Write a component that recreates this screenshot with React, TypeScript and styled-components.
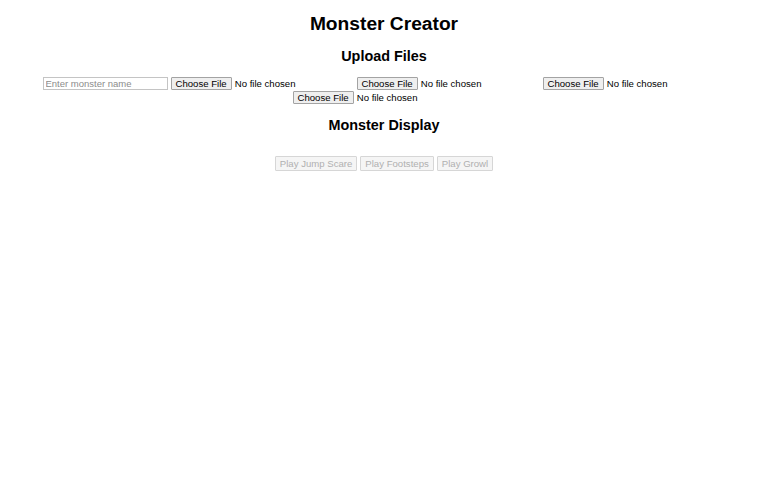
import styled, { createGlobalStyle } from 'styled-components';
import { useState } from 'react';

const GlobalStyle = createGlobalStyle`
  html, body {
    margin: 0;
    background: #fff;
    color: #000;
    font-family: 'Liberation Sans', Arial, sans-serif;
  }
`;

const SOUNDS = ['Play Jump Scare', 'Play Footsteps', 'Play Growl'];
const UPLOADS = ['image', 'jumpScare', 'footsteps', 'growl'];

export default function App() {
  const [name, setName] = useState('');

  return (
    <Page>
      <GlobalStyle />
      <Title>Monster Creator</Title>

      <SectionTitle>Upload Files</SectionTitle>
      <UploadRow>
        <NameInput
          type='text'
          placeholder='Enter monster name'
          value={name}
          onChange={(e) => setName(e.target.value)}
        />
        {UPLOADS.map((id) => (
          <FileInput key={id} type='file' id={id} />
        ))}
      </UploadRow>

      <SectionTitle>Monster Display</SectionTitle>
      <Display />
      <Controls>
        {SOUNDS.map((label) => (
          <SoundButton key={label} disabled>
            {label}
          </SoundButton>
        ))}
      </Controls>
    </Page>
  );
}

const Page = styled.main`
  min-height: 100vh;
  padding: 0 5px;
  box-sizing: border-box;
  text-align: center;
`;

const Title = styled.h1`
  font-size: 19.2px;
  font-weight: 700;
  line-height: 22px;
  margin: 13px 0 13px;
`;

const SectionTitle = styled.h2`
  font-size: 14.4px;
  font-weight: 700;
  line-height: 17px;
  margin: 0 0 12px;
`;

const UploadRow = styled.div`
  display: flex;
  flex-wrap: wrap;
  justify-content: center;
  column-gap: 3px;
  row-gap: 1px;
  margin-bottom: 13px;
`;

const NameInput = styled.input`
  box-sizing: border-box;
  width: 125px;
  height: 13px;
  padding: 0 2px;
  border: 1px solid #c4c4c4;
  border-radius: 0;
  font-family: 'Liberation Sans', Arial, sans-serif;
  font-size: 9.5px;
  color: #000;
  outline: none;

  &::placeholder {
    color: #8c8c8c;
  }
`;

const FileInput = styled.input`
  box-sizing: border-box;
  width: 183px;
  height: 13px;
  padding: 0;
  font-family: 'Liberation Sans', Arial, sans-serif;
  font-size: 9.6px;
  line-height: 11px;
  color: #000;
  text-align: left;

  &::file-selector-button {
    box-sizing: border-box;
    height: 13px;
    margin: 0 3px 0 0;
    padding: 0 4px;
    border: 1px solid #a3a3a3;
    border-radius: 1px;
    background: #efefef;
    font-family: 'Liberation Sans', Arial, sans-serif;
    font-size: 9.6px;
    color: #000;
  }
`;

const Display = styled.div`
  height: 10px;
`;

const Controls = styled.div`
  display: flex;
  justify-content: center;
  gap: 3px;
`;

const SoundButton = styled.button`
  box-sizing: border-box;
  height: 15px;
  padding: 0 4px;
  border: 1px solid #d6d6d6;
  border-radius: 1px;
  background: #f5f5f5;
  font-family: 'Liberation Sans', Arial, sans-serif;
  font-size: 9.6px;
  color: #b0b0b0;
`;
